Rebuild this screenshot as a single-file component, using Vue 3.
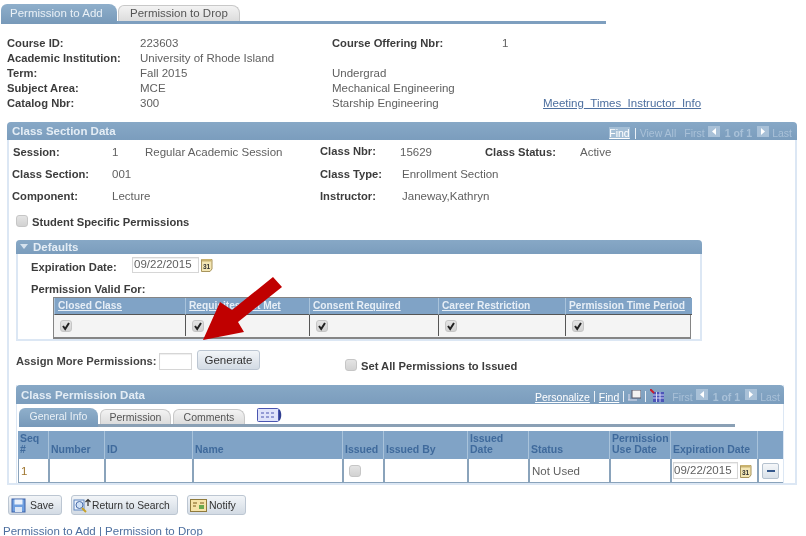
<script setup>
const infoRows = [
  { label: 'Course ID:', value: '223603', l2: 'Course Offering Nbr:', v2: '1' },
  { label: 'Academic Institution:', value: 'University of Rhode Island' },
  { label: 'Term:', value: 'Fall 2015', t2: 'Undergrad' },
  { label: 'Subject Area:', value: 'MCE', t2: 'Mechanical Engineering' },
  { label: 'Catalog Nbr:', value: '300', t2: 'Starship Engineering', link: 'Meeting_Times_Instructor_Info' },
]
const validFor = ['Closed Class', 'Requisites Not Met', 'Consent Required', 'Career Restriction', 'Permission Time Period']
const permHeads = [
  ['Seq #', 30], ['Number', 56], ['ID', 88], ['Name', 150], ['Issued', 41], ['Issued By', 84],
  ['Issued Date', 61], ['Status', 81], ['Permission Use Date', 61], ['Expiration Date', 87], ['', 25],
]
const colTemplate = permHeads.map(h => h[1] + 'px').join(' ')
</script>

<template>
  <div class="page">
    <div class="tabs top">
      <div class="tab active">Permission to Add</div>
      <div class="tab">Permission to Drop</div>
    </div>

    <div class="info">
      <div v-for="r in infoRows" :key="r.label" class="info-row">
        <b>{{ r.label }}</b>
        <span>{{ r.value }}</span>
        <b v-if="r.l2">{{ r.l2 }}</b>
        <span v-else>{{ r.t2 }}</span>
        <span v-if="r.v2" class="v2">{{ r.v2 }}</span>
        <a v-if="r.link" class="mlink">{{ r.link }}</a>
      </div>
    </div>

    <section class="panel main">
      <header class="phead">
        <span>Class Section Data</span>
        <span class="pager"><u class="find">Find</u><i class="sep"></i><em>View All</em><em class="gap">First</em>
          <svg class="arrow-btn" width="12" height="11" viewBox="0 0 12 11"><rect width="12" height="11" fill="#a9c1d8"/><path d="M8 2 4 5.500 8 9z" fill="#fff"/></svg>
          <em class="strong">1 of 1</em>
          <svg class="arrow-btn" width="12" height="11" viewBox="0 0 12 11"><rect width="12" height="11" fill="#a9c1d8"/><path d="M4 2 8 5.500 4 9z" fill="#fff"/></svg>
          <em>Last</em></span>
      </header>

      <div class="sec-row r1">
        <b class="c0">Session:</b><span class="c1">1</span><span class="c2">Regular Academic Session</span>
        <b class="c3">Class Nbr:</b><span class="c4">15629</span><b class="c5">Class Status:</b><span class="c6">Active</span>
      </div>
      <div class="sec-row r2">
        <b class="c0">Class Section:</b><span class="c1b">001</span>
        <b class="c3">Class Type:</b><span class="c4">Enrollment Section</span>
      </div>
      <div class="sec-row r3">
        <b class="c0">Component:</b><span class="c1b">Lecture</span>
        <b class="c3">Instructor:</b><span class="c4">Janeway,Kathryn</span>
      </div>
      <label class="student"><span class="cb"></span><b>Student Specific Permissions</b></label>

      <section class="panel defaults">
        <header class="dhead"><svg width="10" height="6" viewBox="0 0 10 6"><path d="M1 0h8L5 5z" fill="#d5e2ee"/></svg><span>Defaults</span></header>
        <div class="exp">
          <b>Expiration Date:</b>
          <span class="input date">09/22/2015</span>
          <svg class="cal" width="12" height="14" viewBox="0 0 12 14"><path d="M.5 1.500h10.500v9.500l-2 2.500H.5z" fill="#f3e6b4" stroke="#a8945c"/><rect x="1" y="1" width="9.500" height="2.500" fill="#c9b26e"/><text x="2" y="10.500" font-size="6.500" font-weight="700" font-family="Liberation Sans" fill="#333">31</text></svg>
        </div>
        <b class="pvf">Permission Valid For:</b>
        <div class="valid">
          <div v-for="v in validFor" :key="v" class="vcol">
            <a class="vh">{{ v }}</a>
            <div class="vc"><span class="cb checked"><svg width="10" height="10" viewBox="0 0 10 10"><path d="M2 5 4.200 8 8 2" fill="none" stroke="#222" stroke-width="2"/></svg></span></div>
          </div>
        </div>
      </section>

      <div class="assign">
        <b class="am">Assign More Permissions:</b>
        <span class="input small"></span>
        <span class="btn gen">Generate</span>
        <span class="cb setall"></span>
        <b class="sa">Set All Permissions to Issued</b>
      </div>

      <section class="panel perm">
        <header class="phead ph2">
          <span>Class Permission Data</span>
          <span class="pager">
            <u class="find2">Personalize</u><i class="sep"></i><u class="find2">Find</u><i class="sep"></i>
            <svg class="ico" width="13" height="11" viewBox="0 0 13 11"><rect x="4" y="0" width="9" height="8" fill="#f2f2f2" stroke="#556"/><path d="M0 10h9" stroke="#dde" /><path d="M1 4v6" stroke="#dde"/></svg><i class="sep"></i>
            <svg class="ico" width="14" height="13" viewBox="0 0 14 13"><rect x="3" y="3" width="11" height="10" fill="#4c55b8"/><path d="M3 6h11M3 9h11M6.500 3v10M10 3v10" stroke="#cfd3f3"/><path d="M0 0l4 4" stroke="#c81e2c" stroke-width="2"/></svg>
            <em class="gap">First</em>
            <svg class="arrow-btn" width="12" height="11" viewBox="0 0 12 11"><rect width="12" height="11" fill="#a9c1d8"/><path d="M8 2 4 5.500 8 9z" fill="#fff"/></svg>
            <em class="strong">1 of 1</em>
            <svg class="arrow-btn" width="12" height="11" viewBox="0 0 12 11"><rect width="12" height="11" fill="#a9c1d8"/><path d="M4 2 8 5.500 4 9z" fill="#fff"/></svg>
            <em>Last</em>
          </span>
        </header>
        <div class="tabs sub">
          <div class="tab active">General Info</div>
          <div class="tab">Permission</div>
          <div class="tab">Comments</div>
          <svg class="show" width="26" height="14" viewBox="0 0 26 14"><rect x=".5" y=".5" width="21" height="13" rx="1" fill="#dfe3fa" stroke="#4a55b0"/><path d="M4 5h3M9 5h3M14 5h3M4 9h3M9 9h3M14 9h3" stroke="#4a55b0"/><path d="M22 1c3 2 3 10 0 12z" fill="#2f3f90"/></svg>
        </div>
        <div class="grid gh" :style="{ gridTemplateColumns: colTemplate }">
          <div v-for="h in permHeads" :key="h[0]" class="gth">{{ h[0] }}</div>
        </div>
        <div class="grid gb" :style="{ gridTemplateColumns: colTemplate }">
          <div class="gtd">1</div><div class="gtd"></div><div class="gtd"></div><div class="gtd"></div>
          <div class="gtd issued"><span class="cb"></span></div><div class="gtd"></div><div class="gtd"></div>
          <div class="gtd">Not Used</div><div class="gtd"></div>
          <div class="gtd dcell"><span class="input date2">09/22/2015</span>
            <svg class="cal" width="12" height="14" viewBox="0 0 12 14"><path d="M.5 1.500h10.500v9.500l-2 2.500H.5z" fill="#f3e6b4" stroke="#a8945c"/><rect x="1" y="1" width="9.500" height="2.500" fill="#c9b26e"/><text x="2" y="10.500" font-size="6.500" font-weight="700" font-family="Liberation Sans" fill="#333">31</text></svg>
          </div>
          <div class="gtd center"><span class="minus"><i></i></span></div>
        </div>
      </section>
    </section>

    <div class="actions">
      <span class="btn act save">
        <svg width="15" height="15" viewBox="0 0 15 15"><rect x="1" y="1" width="13" height="13" fill="#6f9fe0" stroke="#3e63a8"/><rect x="3.500" y="1.500" width="8" height="5" fill="#eaf1fb"/><rect x="4" y="9" width="7" height="5" fill="#dbe6f5"/></svg>
        Save</span>
      <span class="btn act ret">
        <svg width="19" height="15" viewBox="0 0 19 15"><rect x="1" y="2" width="10" height="10" fill="#eaf1fb" stroke="#5f86c0"/><circle cx="6.500" cy="7" r="3.500" fill="#cfe0f5" stroke="#4a6ca8"/><path d="M9 10l4 4" stroke="#c9a227" stroke-width="2"/><path d="M15 8V2M12.500 4 15 1.500 17.500 4" fill="none" stroke="#333" stroke-width="1.200"/></svg>
        Return to Search</span>
      <span class="btn act not">
        <svg width="17" height="13" viewBox="0 0 17 13"><rect x=".5" y=".5" width="16" height="12" fill="#f6e3a8" stroke="#8f7a3c"/><path d="M3 4h4M3 7h3M10 4h4" stroke="#7a5b1a"/><rect x="9" y="6" width="5" height="4" fill="#6aa84f"/></svg>
        Notify</span>
    </div>

    <div class="foot"><a>Permission to Add</a> | <a>Permission to Drop</a></div>

    <svg class="red-arrow" width="90" height="70" viewBox="0 0 90 70">
      <path d="M73 2 82 12 38 47 44 57 3 65 20 27 32 35z" fill="#c00000"/>
    </svg>
  </div>
</template>

<style scoped>
.page { position: relative; width: 806px; height: 536px; overflow: hidden; background: #fff; padding-top: 4px; box-sizing: border-box; font: 11.500px "Liberation Sans", Arial, sans-serif; color: #606060; filter: blur(.45px); }
b { color: #3c3c3c; font-weight: 700; font-size: 11.200px; }
.tabs { display: flex; align-items: flex-end; box-sizing: border-box; width: 605px; margin-left: 1px; height: 20px; border-bottom: 3px solid #7e9fbf; }
.tab { height: 15px; line-height: 15px; padding: 0 11px; margin-right: 1px; margin-left: 2px; border: 1px solid #c8c8c8; border-bottom: 0; border-radius: 6px 8px 0 0; background: linear-gradient(#f3f3f3, #dcdcdc); color: #555; font-size: 11.500px; }
.tabs > .tab.active { height: 20px; line-height: 18px; margin: 0 0 -3px 0; padding: 0 14px 0 9px; width: 93px; white-space: nowrap; border: 0; background: linear-gradient(#8fafcb, #7799b9); color: #e9f0f6; }
.top > .tab:not(.active) { width: 98px; margin-left: 1px; }
.info { margin: 12px 0 0 7px; height: 75px; }
.info-row { display: grid; grid-template-columns: 133px 192px 170px 41px auto; height: 15px; line-height: 15px; white-space: nowrap; }
.v2 { grid-column: 4; }
.mlink { grid-column: 5; color: #4d6f9f; text-decoration: underline; font-size: 11.500px; }
.panel { box-sizing: border-box; }
.main { width: 790px; margin: 11px 0 0 7px; height: 363px; border: 2px solid #dce7f4; border-top: 0; border-radius: 5px 5px 0 0; }
.phead { display: flex; justify-content: space-between; align-items: center; height: 18px; margin: 0 -2px; padding: 0 5px 0 5px; background: linear-gradient(#87a8c6, #7b9dbd); border-radius: 4px 4px 0 0; color: #e4edf5; font-weight: 700; font-size: 11.500px; }
.pager { display: flex; align-items: center; gap: 3px; font-size: 10.500px; font-weight: 400; color: #a9c1d8; padding-top: 4px; }
.pager em { font-style: normal; }
.pager .gap { margin-left: 5px; }
.pager .strong { font-weight: 700; margin: 0 2px; }
.find { color: #fff; background: #a5bfd6; margin-right: 1px; }
.find2 { color: #fff; }
.sep { width: 1px; height: 11px; background: #eaf0f6; margin: 0 1px; }
.arrow-btn { margin-top: -4px; }
.ico { margin-top: -3px; }
.sec-row { display: grid; grid-template-columns: 99px 34px 175px 0 80px 85px 95px auto; height: 22px; padding-left: 3px; line-height: 22px; white-space: nowrap; }
.r1 { margin-top: 1px; }
.r3 { height: 23px; }
.c0 { grid-column: 1; }
.r1 .c0 { padding-left: 1px; }
.c1, .c1b { grid-column: 2; padding-left: 1px; }
.c1b { grid-column: 2 / 4; }
.c2 { grid-column: 3; }
.c3 { grid-column: 5; }
.c4 { grid-column: 6 / 8; padding-left: 2px; }
.r1 .c4 { grid-column: 6; padding-left: 0; }
.c5 { grid-column: 7; }
.c6 { grid-column: 8; }
.r1 .c3 { margin-top: -1px; }
.student { display: flex; align-items: center; gap: 4px; height: 20px; padding-left: 7px; margin-top: 4px; }
.cb { display: inline-flex; align-items: center; justify-content: center; width: 12px; height: 12px; box-sizing: border-box; border: 1px solid #c6c6c6; border-radius: 3px; background: linear-gradient(#e4e4e4, #d2d2d2); }
.student .cb { margin-top: -3px; }
.defaults { width: 686px; height: 101px; margin: 8px 0 0 7px; border: 2px solid #dce7f4; border-top: 0; border-radius: 4px 4px 0 0; }
.dhead { display: flex; align-items: center; gap: 4px; height: 14px; margin: 0 -2px; padding-left: 3px; background: linear-gradient(#87a8c6, #7b9dbd); color: #e4edf5; font-size: 11.500px; font-weight: 700; border-radius: 4px 4px 0 0; }
.exp { display: flex; align-items: center; height: 22px; padding: 1px 0 0 13px; gap: 0; }
.exp b { width: 101px; margin-top: 2px; }
.input { display: inline-block; box-sizing: border-box; border: 1px solid #d6d6d6; background: #fff; box-shadow: inset 0 1px 1px #eee; }
.date { width: 67px; height: 16px; line-height: 13px; padding-left: 1px; margin-top: -3px; }
.cal { margin-left: 2px; }
.exp .cal { margin-top: -2px; }
.pvf { display: block; padding-left: 13px; margin-top: 5px; line-height: 15px; }
.valid { display: grid; grid-template-columns: 131px 124px 129px 127px 127px; width: 638px; margin: 0 0 0 35px; border: 1px solid #858585; border-bottom-width: 2px; box-sizing: border-box; height: 42px; background: #f4f4f4; }
.vh { display: block; box-sizing: border-box; height: 17px; line-height: 16px; padding-left: 3px; background: #80a3c6; color: #e6eef6; font-size: 10.200px; font-weight: 700; text-decoration: underline; white-space: nowrap; border-left: 1px solid #a9c3db; border-bottom: 1px solid #555; overflow: hidden; }
.vc { height: 21px; display: flex; align-items: center; padding-left: 6px; border-left: 1px solid #555; }
.vcol:first-child .vc { border-left: 0; }
.assign { display: flex; align-items: center; height: 22px; margin-top: 9px; padding-left: 7px; }
.am { color: #444; width: 143px; white-space: nowrap; }
.small { width: 33px; height: 17px; }
.btn { display: inline-flex; align-items: center; box-sizing: border-box; border: 1px solid #bcc6d2; border-radius: 3px; background: linear-gradient(#f2f5f8, #d3dbe4); color: #333; white-space: nowrap; }
.gen { width: 63px; height: 20px; margin-left: 5px; justify-content: center; font-size: 11.500px; margin-top: -2px; }
.setall { margin: 7px 0 0 85px; }
.sa { margin: 10px 0 0 4px; }
.perm { width: 768px; height: 99px; margin: 13px 0 0 7px; border: 1px solid #dce7f4; border-top: 0; }
.ph2 { height: 19px; margin: 0 -1px; padding-right: 4px; }
.sub { width: 716px; height: 19px; margin: 4px 0 0 2px; border-bottom-width: 3px; border-color: #8aa0b5; }
.sub .tab { font-size: 10.500px; height: 15px; line-height: 15px; width: 71px; padding: 0; margin: 0 2px 0 0; box-sizing: border-box; white-space: nowrap; text-align: center; }
.sub .tab:nth-child(3) { width: 72px; }
.sub .tab.active { width: 79px; height: 19px; line-height: 16px; margin: 0 2px -3px 0; padding: 0; }
.show { align-self: flex-start; margin: 0 0 0 10px; }
.grid { display: grid; margin-left: 1px; }
.gh { margin-top: 4px; height: 28px; background: #80a3c6; }
.gth { display: flex; align-items: flex-end; padding: 0 2px 4px; box-sizing: border-box; line-height: 11px; color: #3f6a9c; font-weight: 700; font-size: 10.500px; border-left: 1px solid #a9c3db; }
.gth:first-child { border-left: 0; }
.gb { height: 23px; border-bottom: 1px solid #8aa3bb; }
.gtd { display: flex; align-items: center; box-sizing: border-box; padding-left: 2px; border-left: 2px solid #8aa3bb; white-space: nowrap; }
.gtd:first-child { border-left: 1px solid #8aa3bb; color: #a0762f; }
.center { justify-content: center; padding-left: 0; }
.issued { padding-left: 5px; }
.dcell { padding-left: 1px; }
.date2 { width: 65px; height: 17px; line-height: 15px; padding-left: 0; font-size: 11.500px; }
.dcell .cal { margin-left: 2px; }
.minus { display: flex; align-items: center; justify-content: center; width: 15px; height: 14px; border: 1px solid #b5c2cf; border-radius: 2px; background: linear-gradient(#f5f7f9, #d9e1e9); }
.minus i { width: 8px; height: 2px; background: #35588c; }
.actions { display: flex; margin: 10px 0 0 8px; }
.act { height: 20px; font-size: 10.500px; gap: 2px; }
.save { width: 54px; padding-left: 2px; gap: 4px; }
.ret { width: 107px; margin-left: 9px; padding-left: 1px; gap: 0; font-size: 10.300px; }
.not { width: 59px; margin-left: 9px; padding-left: 2px; gap: 2px; }
.foot { margin: 10px 0 0 3px; font-size: 11.500px; line-height: 13px; color: #4d6f9f; white-space: nowrap; }
.red-arrow { position: absolute; left: 200px; top: 275px; }
</style>
